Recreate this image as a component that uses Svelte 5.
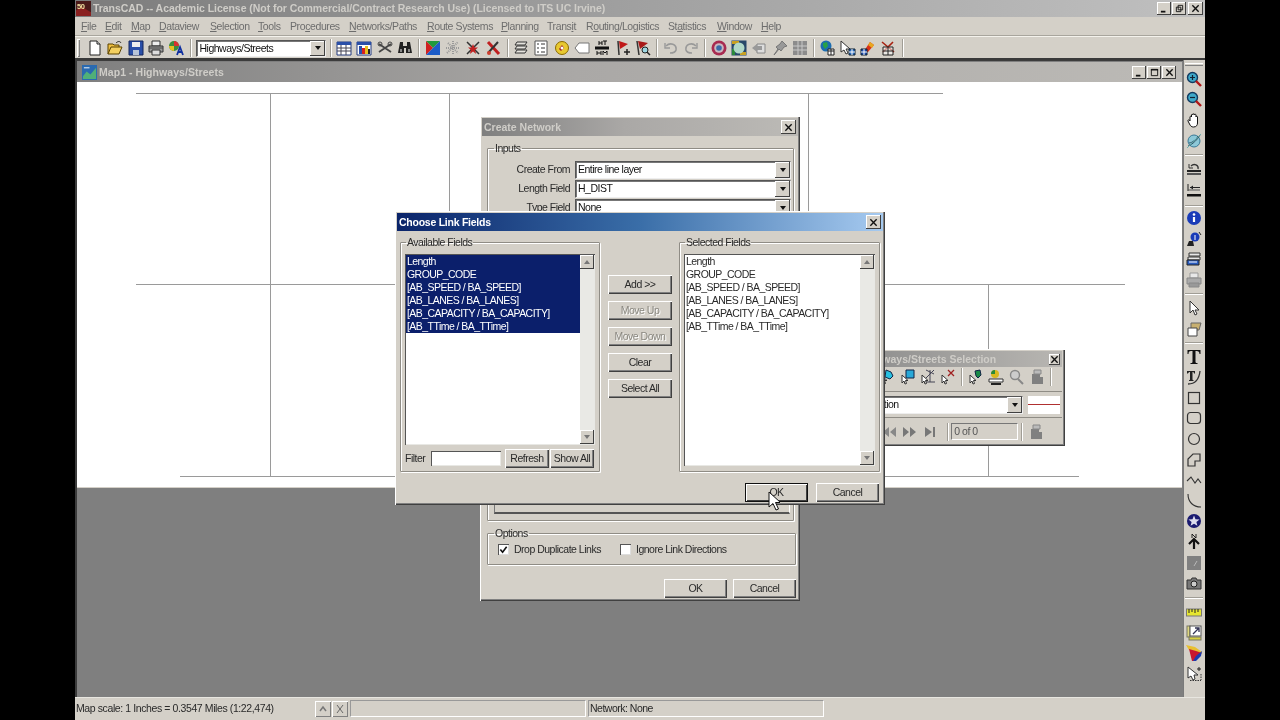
<script>
  const menus = [
    ['', 'F', 'ile', 24], ['', 'E', 'dit', 26], ['', 'M', 'ap', 28], ['', 'D', 'ataview', 51], ['', 'S', 'election', 48],
    ['', 'T', 'ools', 32], ['Pro', 'c', 'edures', 59], ['', 'N', 'etworks/Paths', 78], ['', 'R', 'oute Systems', 74],
    ['', 'P', 'lanning', 46], ['Trans', 'i', 't', 39], ['R', 'o', 'uting/Logistics', 82], ['St', 'a', 'tistics', 49],
    ['', 'W', 'indow', 44], ['', 'H', 'elp', 30]
  ];
  const I = {
    new: '<path d="M3 1h7l3 3v11H3z" fill="#fff" stroke="#222"/><path d="M10 1v3h3" fill="#ddd" stroke="#222"/>',
    open: '<path d="M1 14V4h5l1 1h5v2" fill="#f0c040" stroke="#5a4200"/><path d="M1 14l3-7h11l-3 7z" fill="#f4d060" stroke="#5a4200"/><path d="M9 3c2-2 4-2 5 0" fill="none" stroke="#222"/>',
    save: '<path d="M1 1h14v14H1z" fill="#2a4fa8" stroke="#14265c"/><path d="M4 2h8v5H4z" fill="#eee"/><path d="M5 10h6v5H5z" fill="#b8c4d8"/>',
    print: '<path d="M4 1h8v5H4z" fill="#eee" stroke="#333"/><path d="M1 6h14v6H1z" fill="#999" stroke="#333"/><path d="M4 10h8v5H4z" fill="#ddd" stroke="#333"/><path d="M1 8h14" stroke="#444"/>',
    color: '<circle cx="6" cy="6" r="5" fill="#3c8c3c"/><path d="M6 1a5 5 0 0 1 5 5H6z" fill="#d83030"/><path d="M1 6a5 5 0 0 0 5 5V6z" fill="#e8c020"/><path d="M9 15l3-8 3 8M10 12h4" fill="none" stroke="#1030a0" stroke-width="1.8"/>',
    table: '<path d="M1 2h14v13H1z" fill="#fff" stroke="#223a80"/><path d="M1 2h14v3H1z" fill="#2a4fa8"/><path d="M1 8h14M1 11h14M5 5v10M10 5v10" stroke="#445"/>',
    palette: '<path d="M1 2h14v13H1z" fill="#fff" stroke="#223a80"/><path d="M1 2h14v3H1z" fill="#2a4fa8"/><path d="M3 6h3v8H3z" fill="#2a4fa8"/><path d="M6 8h3v6H6z" fill="#d82020"/><path d="M9 6h3v8H9z" fill="#e8c020"/><path d="M12 9h2v5h-2z" fill="#222"/>',
    scissors: '<path d="M2 4l12 8M2 12l12-8" stroke="#444" stroke-width="1.800"/><circle cx="3" cy="4" r="2" fill="none" stroke="#444"/><circle cx="13" cy="4" r="2" fill="none" stroke="#444"/>',
    binoc: '<path d="M3 2h3v4h4V2h3l2 11H9V8H7v5H1z" fill="#222"/><path d="M3 9h2v3H3zM11 9h2v3h-2z" fill="#888"/>',
    mapcolor: '<path d="M1 1h14L8 8z" fill="#1f9a3c"/><path d="M1 1v14l7-7z" fill="#d02020"/><path d="M15 1v14H1l7-7z" fill="#1c5cc8"/>',
    dots: '<path d="M2 13L13 2M3 3l10 10M8 1v14M1 8h14" stroke="#999" stroke-width="2" stroke-dasharray="1 1"/>',
    starx: '<path d="M2 2l12 12M14 2L2 14" stroke="#333" stroke-width="1.5"/><path d="M8 4l1.5 3.5H13l-3 2.4 1.2 4L8 11.5 4.8 14 6 9.9 3 7.5h3.5z" fill="#c02020"/>',
    xtool: '<path d="M3 2l11 12" stroke="#c02020" stroke-width="3"/><path d="M13 2L3 13" stroke="#333" stroke-width="2"/><circle cx="4" cy="13" r="2" fill="#d04030"/>',
    layers: '<path d="M4 2h10l-2 3H2zM4 6h10l-2 3H2zM4 10h10l-2 3H2z" fill="#e6e4de" stroke="#333"/>',
    list: '<path d="M2 1h12v14H2z" fill="#fff" stroke="#555"/><path d="M4 4h2M8 4h4M4 8h2M8 8h4M4 12h2M8 12h4" stroke="#333"/>',
    yellow: '<circle cx="8" cy="8" r="6.5" fill="#e8c830" stroke="#8a6a00"/><path d="M5 9l3-4 2 3-3 3z" fill="#a02020"/><circle cx="8" cy="8" r="1.5" fill="#fff"/>',
    tag: '<path d="M5 3h10v10H5L1 8z" fill="#fff" stroke="#777"/>',
    ht: '<rect x="1" y="6.5" width="14" height="3" fill="#111"/><path d="M5 1v4M8 1v4M5 3h3M9 1h4M11 1v4M3 11v4M7 11v4M3 13h4M9 11v4M13 11v4M9 11l2 2 2-2" stroke="#111" fill="none"/>',
    flagp: '<path d="M3 1l1 14" stroke="#333" stroke-width="1.5"/><path d="M4 1l9 3-8 5z" fill="#c01818"/><path d="M9 12h6M12 9v6" stroke="#222" stroke-width="1.5"/>',
    flags: '<path d="M2 1l2 14" stroke="#333" stroke-width="1.5"/><path d="M3 1l10 2-8 6z" fill="#a81818"/><circle cx="10" cy="10" r="3" fill="#9cd4e0" stroke="#222"/><path d="M12 12l3 3" stroke="#222" stroke-width="1.5"/>',
    undo: '<path d="M3 6c4-4 11-2 10 4-.5 2-3 3-6 3" fill="none" stroke="#999" stroke-width="1.6"/><path d="M2 3v5h5" fill="none" stroke="#999" stroke-width="1.4"/>',
    redo: '<path d="M13 6C9 2 2 4 3 10c.5 2 3 3 6 3" fill="none" stroke="#999" stroke-width="1.6"/><path d="M14 3v5H9" fill="none" stroke="#999" stroke-width="1.4"/>',
    target: '<circle cx="8" cy="8" r="7.500" fill="#a82a50"/><circle cx="8" cy="8" r="4.800" fill="#c8b8c0"/><circle cx="8" cy="8" r="2.800" fill="#3a6aa8"/>',
    gsq: '<rect x="0.500" y="0.500" width="15" height="15" fill="#28486a"/><path d="M1 1h7v3H1zM9 12h6v3H9z" fill="#c8a020"/><path d="M1 9h3v6H1z" fill="#2a8a3a"/><circle cx="8" cy="8" r="5.500" fill="#b0d8c8"/>',
    arrowbox: '<path d="M6 4h8v9H6z" fill="#ddd" stroke="#888"/><path d="M1 8l5-4v2h5v4H6v2z" fill="#999"/>',
    pin: '<path d="M10 1l5 5-3 1-3 4-2-2-5 6 4-6-2-2 4-3z" fill="#999" stroke="#777"/>',
    grid: '<path d="M1 1h14v14H1z" fill="#8c8c8c"/><path d="M1 6h14M1 10h14M6 1v14M10 1v14" stroke="#c8c8c8"/>',
    globe: '<circle cx="7" cy="6" r="5.500" fill="#1c6cb0"/><path d="M4 3l4-1 1 4-3 3-2-3z" fill="#28a048"/><path d="M9 9h6v6H9z" fill="#fff" stroke="#222"/><path d="M9 11h6M12 9v6" stroke="#222"/>',
    curtab: '<path d="M1 1v11l3-2 2 4 2-1-2-4h4z" fill="#fff" stroke="#333"/><path d="M9 9h6v6H9z" fill="#2a6cc0" stroke="#123"/><path d="M9 12h6M12 9v6" stroke="#fff"/>',
    coltab: '<path d="M4 11l6-9 4 3-6 7z" fill="#d83018"/><path d="M10 2l4 3-2 3-4-3z" fill="#e8a820"/><path d="M1 9h6v6H1z" fill="#1c4cb0" stroke="#123"/><path d="M1 12h6M4 9v6" stroke="#fff"/>',
    xtab: '<path d="M2 2l12 10M13 2L3 12" stroke="#a82010" stroke-width="1.6"/><path d="M3 7h10v8H3z" fill="#fff" fill-opacity=".5" stroke="#222"/><path d="M3 11h10M8 7v8" stroke="#222"/>',
    zin: '<circle cx="6.500" cy="6.500" r="5" fill="#3ea8c8" stroke="#123a60" stroke-width="1.400"/><path d="M4 6.500h5M6.500 4v5" stroke="#123" stroke-width="1.200"/><path d="M10 10l5 5" stroke="#b01818" stroke-width="2.400"/>',
    zout: '<circle cx="6.500" cy="6.500" r="5" fill="#3ea8c8" stroke="#123a60" stroke-width="1.400"/><path d="M4 6.500h5" stroke="#123" stroke-width="1.200"/><path d="M10 10l5 5" stroke="#b01818" stroke-width="2.400"/>',
    hand: '<path d="M4 9V5c0-1 1.500-1 1.500 0V3c0-1 1.500-1 1.500 0v-.5c0-1 1.500-1 1.500 0V3c0-1 1.500-1 1.500 0v2c0-1 1.500-1 1.500 0v6c0 2-1 4-4 4-2 0-3-1-4-3L2 9c-.5-1 1-2 2 0z" fill="#fff" stroke="#111"/>',
    orbit: '<circle cx="8" cy="8" r="6" fill="#8cc8d8" stroke="#3a7a98"/><path d="M2 13C6 12 12 6 14 2M3 10c3 0 8-4 9-7" fill="none" stroke="#356"/><path d="M1 15L15 1" stroke="#5aa" stroke-width=".8"/>',
    rot: '<path d="M5 4c3-3 8-1 7 3" fill="none" stroke="#333" stroke-width="1.300"/><path d="M3 2v4h4" fill="none" stroke="#333"/><rect x="1" y="8" width="14" height="2" fill="#222"/><path d="M1 12h14" stroke="#555" stroke-width="2"/>',
    shift: '<path d="M2 1v7M4 4.500h10" stroke="#222"/><path d="M4 4.500l3-2v4z" fill="#222"/><path d="M2 7h12" stroke="#555"/><rect x="1" y="11" width="14" height="2.500" fill="#111"/>',
    info: '<circle cx="8" cy="8" r="7" fill="#1a3cb8"/><circle cx="8" cy="4.500" r="1.300" fill="#fff"/><path d="M8 7v5" stroke="#fff" stroke-width="2.200"/>',
    info2: '<circle cx="9" cy="6" r="4.500" fill="#1a3cb8"/><path d="M1 15l2-5h4l1 5z" fill="#222"/><path d="M9 4v5" stroke="#fff"/><path d="M13 1l2 3" stroke="#222"/>',
    stack: '<path d="M3 2h11v3H3zM2 6h12v3H2z" fill="#e8e8e8" stroke="#333"/><path d="M1 9h12v5H1z" fill="#2a5cc0" stroke="#222"/><path d="M3 11h8" stroke="#fff"/>',
    grayprint: '<path d="M4 1h8v5H4z" fill="#e8e8e8" stroke="#999"/><path d="M1 6h14v6H1z" fill="#aaa" stroke="#888"/><path d="M3 11h10v4H3z" fill="#999" stroke="#888"/>',
    cursor: '<path d="M4 1v12l3-3 2 5 2-1-2-4h4z" fill="#fff" stroke="#333"/>',
    note: '<path d="M5 2l10 0-2 7H5z" fill="#c8b070" stroke="#666"/><path d="M2 7h9v8H2z" fill="#fff" stroke="#444"/>',
    T: '<path d="M1.500 1h13v4h-1c0-2-1-3-3-3H9.500v11c0 1 1 1 2 1v1h-7v-1c1 0 2 0 2-1V2H5c-2 0-2.500 1-2.500 3h-1z" fill="#111"/>',
    Tc: '<path d="M1 2h8v2.500H8c0-1-.5-1.500-1.500-1.500v7.500c0 .5.500.5 1 .5v1H3v-1c.5 0 1 0 1-.5V3C3 3 2.500 3.500 2 4.500H1z" fill="#222"/><path d="M2 15c6 0 11-4 12-13" fill="none" stroke="#333" stroke-width="1.300"/>',
    rect: '<rect x="2.500" y="2.500" width="11" height="11" fill="none" stroke="#333" stroke-width="1.200"/>',
    rrect: '<rect x="1.500" y="2.500" width="13" height="11" rx="3" fill="none" stroke="#333" stroke-width="1.200"/>',
    circ: '<circle cx="8" cy="8" r="5.500" fill="none" stroke="#333" stroke-width="1.200"/>',
    poly: '<path d="M2 14V7l5-5h7v7H9v5z" fill="none" stroke="#333" stroke-width="1.200"/>',
    zig: '<path d="M1 9l4-4 4 6 3-4 3 4" fill="none" stroke="#333" stroke-width="1.100"/>',
    arc: '<path d="M2 1c0 8 5 13 13 13" fill="none" stroke="#333" stroke-width="1.100"/>',
    star: '<circle cx="8" cy="8" r="7" fill="#1a1a70"/><path d="M8 2.500l1.500 3.700 4 .2-3.100 2.500 1 3.900L8 10.700l-3.400 2.100 1-3.900-3.100-2.500 4-.2z" fill="#dde"/>',
    north: '<path d="M8 15V6M3 10l5-5 5 5" fill="none" stroke="#111" stroke-width="2.200"/><path d="M6 4V0l4 4V0" fill="none" stroke="#111" stroke-width=".9"/>',
    grayimg: '<rect x="1" y="1" width="14" height="14" fill="#808080"/><path d="M8 11l3-5" stroke="#b8b8b8"/>',
    cam: '<path d="M1 5h4l1-2h4l1 2h4v9H1z" fill="#777" stroke="#333"/><circle cx="8" cy="9" r="3" fill="#ccc" stroke="#222"/>',
    ruler: '<rect x="0.500" y="5" width="15" height="7" fill="#e6e630" stroke="#777"/><path d="M3 5v4M6 5v3M9 5v4M12 5v3" stroke="#222"/>',
    rscale: '<rect x="1" y="1" width="3" height="11" fill="#e0d880" stroke="#776"/><rect x="4" y="1" width="11" height="10" fill="#fff" stroke="#555"/><path d="M7 9l6-6M9 3h4v4" stroke="#335" fill="none" stroke-width="1.300"/><rect x="3" y="12" width="12" height="3" fill="#d8d040" stroke="#776"/>',
    ytool: '<path d="M0 0l9 2 7 5-1 2-7-3-5-1z" fill="#e8c030"/><path d="M3 4l7 2 6 2-5 3-3 5-2 0z" fill="#c81830"/><path d="M16 6l-1 5-5 5H7l3-5z" fill="#1c3cb0"/>',
    cursd: '<path d="M2 1v11l3-2 2 4 2-1-1-4h4z" fill="#fff" stroke="#333"/><path d="M4 14.500h11M15 8v6" stroke="#333" stroke-dasharray="1.500 1"/><path d="M11 3h4M13 1v4" stroke="#222"/>',
    sel1: '<path d="M7 1l5 2 2 4-3 3-5-2z" fill="#28c0e0" stroke="#124"/><path d="M2 6v8l2-2 1 3 1.500-.5-1-3H8z" fill="#fff" stroke="#333"/>',
    sel2: '<path d="M6 1h8v8H6z" fill="#28a8d8" stroke="#124"/><path d="M2 6v8l2-2 1 3 1.500-.5-1-3H8z" fill="#fff" stroke="#333"/>',
    sel3: '<path d="M6 1l8 4M14 1L6 9M10 1v12M5 13h10" stroke="#445" fill="none"/><path d="M2 6v8l2-2 1 3 1.500-.5-1-3H8z" fill="#fff" stroke="#333"/>',
    sel4: '<path d="M8 1l6 6M14 1L8 7" stroke="#a02020" stroke-width="1.300"/><path d="M2 6v8l2-2 1 3 1.500-.5-1-3H8z" fill="#fff" stroke="#333"/>',
    sel5: '<path d="M7 2l5-1 1 5-3 3-2-2z" fill="#1a8a48" stroke="#124"/><path d="M2 6v8l2-2 1 3 1.500-.5-1-3H8z" fill="#fff" stroke="#333"/>',
    sel6: '<circle cx="7" cy="5" r="4" fill="#d8b820"/><path d="M3 5a4 4 0 0 1 4-4v4z" fill="#2a8a3a"/><path d="M1 10h14v3H1z" fill="#fff" stroke="#333"/><path d="M3 15h10" stroke="#222" stroke-width="2"/>',
    sel7: '<circle cx="7" cy="6" r="4.500" fill="#ccc" stroke="#888" stroke-width="1.400"/><path d="M10 10l5 5" stroke="#888" stroke-width="2"/>',
    sel8: '<path d="M3 5h8v3h3v7H3z" fill="#808080"/><path d="M5 1h7v4H5z" fill="#bbb" stroke="#888"/>',
    first: '<path d="M15 3L9 8l6 5zM8 3L2 8l6 5z" fill="#888"/>',
    next: '<path d="M1 3l6 5-6 5zM8 3l6 5-6 5z" fill="#777"/>',
    last: '<path d="M3 3l7 5-7 5z" fill="#777"/><path d="M12 3v10" stroke="#777" stroke-width="2"/>'
  };
  const mainBar = [
    ['new','open','save','print','color'],
    'combo',
    ['table','palette','scissors','binoc'],
    ['mapcolor','dots','starx','xtool'],
    ['layers','list','yellow','tag','ht','flagp','flags'],
    ['undo','redo'],
    ['target','gsq','arrowbox','pin','grid'],
    ['globe','curtab','coltab','xtab']
  ];
  const sideBar = [
    ['zin','zout','hand','orbit'], ['rot','shift'], ['info','info2','stack','grayprint'], ['cursor','note'],
    ['T','Tc','rect','rrect','circ','poly','zig','arc','star','north','grayimg','cam'], ['ruler','rscale','ytool','cursd']
  ];
  const fields = ['Length','GROUP_CODE','[AB_SPEED / BA_SPEED]','[AB_LANES / BA_LANES]','[AB_CAPACITY / BA_CAPACITY]','[AB_TTime / BA_TTime]'];
</script>

{#snippet icon(n)}
  <svg class="ic" viewBox="0 0 16 16" aria-hidden="true">{@html I[n]}</svg>
{/snippet}

{#snippet scroll()}
  <div class="sb">
    <span class="sbtn"><i class="up"></i></span>
    <span class="track"></span>
    <span class="sbtn"><i class="down"></i></span>
  </div>
{/snippet}

{#snippet combo(text, cls)}
  <div class="combo {cls}"><span class="combotext">{text}</span><span class="cbtn"><i class="down"></i></span></div>
{/snippet}

{#snippet ctl(kind, cls)}
  <span class="ctl {cls}">
    {#if kind === 'x'}
      <svg viewBox="0 0 10 10"><path d="M1.500 1.500l7 7M8.500 1.500l-7 7" stroke="#111" stroke-width="1.500"/></svg>
    {:else if kind === 'min'}
      <svg viewBox="0 0 10 10"><path d="M1 8.500h5" stroke="#111" stroke-width="2"/></svg>
    {:else if kind === 'max'}
      <svg viewBox="0 0 10 10"><path d="M1.500 1.500h7v7h-7z" fill="none" stroke="#111"/><path d="M1 2h8" stroke="#111" stroke-width="1.500"/></svg>
    {:else}
      <svg viewBox="0 0 10 10"><path d="M3.500 1.500h5v5h-5zM1.500 3.500h5v5h-5z" fill="#d4d0c8" stroke="#111"/></svg>
    {/if}
  </span>
{/snippet}

<div class="screen">
  <div class="app">
    <header class="apptitle">
      <svg class="appicon" viewBox="0 0 16 16"><rect width="16" height="16" fill="#4a1a1a"/><path d="M0 10l6-4 10 6v4H0z" fill="#8a2020"/><text x="1" y="9" font-size="8" font-weight="700" fill="#f0e0a0" font-family="Liberation Sans">50</text></svg>
      <span class="apptext">TransCAD -- Academic License (Not for Commercial/Contract Research Use) (Licensed to ITS UC Irvine)</span>
      <span class="ctls">
        {@render ctl('min', '')}
        {@render ctl('res', '')}
        {@render ctl('x', 'gapl')}
      </span>
    </header>

    <nav class="menubar">
      {#each menus as m}
        <span class="menu" style="width:{m[3]}px">{m[0]}<u>{m[1]}</u>{m[2]}</span>
      {/each}
    </nav>

    <div class="toolbar">
      <span class="grip"></span>
      {#each mainBar as g, i}
        {#if g === 'combo'}
          {@render combo('Highways/Streets', 'layercombo')}
        {:else}
          <div class="tgroup">
            {#each g as n}<span class="tb">{@render icon(n)}</span>{/each}
          </div>
        {/if}
        <span class="tsep"></span>
      {/each}
    </div>

    <div class="main">
      <div class="desktop">
        <section class="mapwin">
          <div class="wintitle inactive">
            <svg class="mapicon" viewBox="0 0 16 16"><rect width="16" height="16" fill="#2a6ab0"/><path d="M1 12l4-5 4 3 6-7v12H1z" fill="#50b078"/><path d="M2 3h6" stroke="#fff"/></svg>
            <span class="maptitle">Map1 - Highways/Streets</span>
            <span class="mapctls">
              {@render ctl('min', '')}
              {@render ctl('max', '')}
              {@render ctl('x', '')}
            </span>
          </div>
          <div class="canvas">
            <svg class="roads" viewBox="0 0 1105 406" aria-hidden="true">
              <g stroke="#9a9a9a" stroke-width="1" fill="none">
                <path d="M59 11.500H866M59 202.500H1048M103 394.500H1002"/>
                <path d="M193.500 11V394M372.500 11V394M731.500 11V394M911.500 202V394"/>
              </g>
            </svg>
          </div>
        </section>

        <section class="seltool">
          <div class="seltitle"><span class="seltext">Highways/Streets Selection</span>{@render ctl('x', 'small')}</div>
          <div class="selrow icons">
            {#each ['sel1','sel2','sel3','sel4'] as n}<span class="tb">{@render icon(n)}</span>{/each}
            <span class="tsep"></span>
            {#each ['sel5','sel6','sel7','sel8'] as n}<span class="tb">{@render icon(n)}</span>{/each}
            <span class="tsep end"></span>
          </div>
          <div class="selrow mid">
            {@render combo('Selection', 'selcombo')}
            <span class="swatch"><i></i></span>
          </div>
          <div class="selrow nav">
            <span class="tb">{@render icon('first')}</span>
            <span class="tb">{@render icon('next')}</span>
            <span class="tb">{@render icon('last')}</span>
            <span class="tsep navfirst"></span>
            <span class="counter">0 of 0</span>
            <span class="tsep"></span>
            <span class="tb">{@render icon('sel8')}</span>
          </div>
        </section>

        <section class="dlg createnet">
          <div class="dlgtitle inactive"><span>Create Network</span>{@render ctl('x', 'dlgx')}</div>
          <fieldset class="inputs">
            <legend>Inputs</legend>
            <div class="frow"><span>Create From</span>{@render combo('Entire line layer', 'wide')}</div>
            <div class="frow"><span>Length Field</span>{@render combo('H_DIST', 'wide')}</div>
            <div class="frow"><span>Type Field</span>{@render combo('None', 'wide')}</div>
            <div class="hidden-box"></div>
          </fieldset>
          <fieldset class="options">
            <legend>Options</legend>
            <div class="checks">
              <span class="check first"><span class="box"><svg viewBox="0 0 10 10"><path d="M1.500 5l2.500 3 4.500-6" fill="none" stroke="#111" stroke-width="1.800"/></svg></span>Drop Duplicate Links</span>
              <span class="check"><span class="box"></span>Ignore Link Directions</span>
            </div>
          </fieldset>
          <div class="dlgbtns">
            <button class="btn wide">OK</button>
            <button class="btn wide">Cancel</button>
          </div>
        </section>

        <section class="dlg chooser">
          <div class="dlgtitle active"><span>Choose Link Fields</span>{@render ctl('x', 'dlgx')}</div>
          <div class="panes">
            <fieldset class="pane">
              <legend>Available Fields</legend>
              <div class="list short">
                <div class="items">
                  {#each fields as f}<div class="item sel">{f}</div>{/each}
                </div>
                {@render scroll()}
              </div>
              <div class="filter">
                <span class="flabel">Filter</span>
                <span class="input"></span>
                <button class="btn flat refresh">Refresh</button>
                <button class="btn flat showall">Show All</button>
              </div>
            </fieldset>
            <div class="midbtns">
              <button class="btn mb">Add &gt;&gt;</button>
              <button class="btn mb off">Move Up</button>
              <button class="btn mb off">Move Down</button>
              <button class="btn mb">Clear</button>
              <button class="btn mb">Select All</button>
            </div>
            <fieldset class="pane right">
              <legend>Selected Fields</legend>
              <div class="list tall">
                <div class="items">
                  {#each fields as f}<div class="item">{f}</div>{/each}
                </div>
                {@render scroll()}
              </div>
            </fieldset>
          </div>
          <div class="dlgbtns chooserbtns">
            <button class="btn wide default">OK</button>
            <button class="btn wide">Cancel</button>
          </div>
        </section>

        <svg class="pointer" viewBox="0 0 12 20" aria-hidden="true"><path d="M1 1v15l4-3.500 3 6.500 2.500-1-3-6.500h5z" fill="#fff" stroke="#111"/></svg>
      </div>

      <aside class="sidebar">
        <span class="hgrip"></span>
        {#each sideBar as g, i}
          {#if i > 0}<span class="hsep s{i}"></span>{/if}
          {#each g as n}<span class="sb-btn">{@render icon(n)}</span>{/each}
        {/each}
      </aside>
    </div>

    <footer class="status">
      <span class="scale">Map scale: 1 Inches = 0.3547 Miles (1:22,474)</span>
      <span class="stbtn"><svg viewBox="0 0 10 10"><path d="M2 7l3-4 3 4" fill="none" stroke="#777" stroke-width="1.500"/></svg></span>
      <span class="stbtn"><svg viewBox="0 0 10 10"><path d="M2 1l6 8M8 1L2 9" stroke="#666"/></svg></span>
      <span class="stfield blank"></span>
      <span class="stfield net">Network: None</span>
    </footer>
  </div>
</div>

<style>
  :global(body) { margin: 0; background: #000; overflow: hidden; }
  .screen { width: 1280px; height: 720px; background: #000; display: flex; justify-content: center; font: 10.5px/13px "Liberation Sans", Arial, sans-serif; letter-spacing: -.5px; color: #2a2a2a; filter: blur(.4px); }
  .app { width: 1130px; height: 720px; background: #d4d0c8; display: flex; flex-direction: column; overflow: hidden; }

  .apptitle { height: 17px; flex: none; display: flex; align-items: center; background: linear-gradient(90deg, #7c7c7c 0%, #9a9a9a 40%, #c0c0c0 100%); padding: 0 2px 0 1px; }
  .appicon { width: 15px; height: 15px; margin-right: 2px; }
  .apptext { font-weight: 700; letter-spacing: -.05px; color: #cfcdc8; flex: 1; white-space: nowrap; }
  .ctls { display: flex; gap: 1px; }
  .ctl { width: 14px; height: 13px; background: #d4d0c8; display: flex; align-items: center; justify-content: center; box-shadow: inset -1px -1px 0 #404040, inset 1px 1px 0 #fff; flex: none; }
  .ctl svg { width: 9px; height: 9px; }
  .gapl { margin-left: 1px; width: 15px; }

  .menubar { height: 19px; flex: none; display: flex; align-items: center; padding-left: 6px; color: #6d6d6d; border-bottom: 1px solid #a8a59d; box-sizing: border-box; letter-spacing: -.4px; }
  .menu { display: block; white-space: nowrap; flex: none; }
  .menu u { text-decoration-thickness: 1px; }

  .toolbar { height: 24px; flex: none; display: flex; align-items: center; padding: 1px 0 0 2px; box-sizing: border-box; border-top: 1px solid #f4f2ec; border-bottom: 2px solid #3a3a3a; }
  .grip { width: 3px; height: 18px; margin-right: 5px; background: #d4d0c8; box-shadow: inset 1px 1px 0 #fff, inset -1px -1px 0 #808080; }
  .tgroup { display: flex; }
  .tb { width: 20.300px; height: 20px; display: flex; align-items: center; justify-content: center; flex: none; }
  .ic { width: 16px; height: 16px; display: block; }
  .tsep { width: 1px; height: 18px; margin: 0 3.300px 0 3.100px; background: #a09d95; box-shadow: 1px 0 0 #fff; flex: none; }

  .combo { display: flex; align-items: center; background: #fff; box-sizing: border-box; border: 1px solid #555; border-right-color: #eee; border-bottom-color: #eee; box-shadow: inset 1px 1px 0 #777; color: #111; overflow: hidden; flex: none; }
  .combotext { flex: 1; padding-left: 2px; white-space: nowrap; }
  .cbtn { width: 15px; align-self: stretch; background: #d4d0c8; box-shadow: inset -1px -1px 0 #404040, inset 1px 1px 0 #fff; display: flex; align-items: center; justify-content: center; flex: none; }
  .down, .up { width: 0; height: 0; border-left: 3.500px solid transparent; border-right: 3.500px solid transparent; display: block; }
  .down { border-top: 4px solid #111; }
  .up { border-bottom: 4px solid #777; }
  .sb .down { border-top-color: #777; }
  .layercombo { width: 130px; height: 17px; margin-left: 2.600px; }

  .main { flex: 1; min-height: 0; display: flex; }
  .desktop { flex: 1; position: relative; background: #7f7f7f; box-shadow: inset 2px 1px 0 #3c3c3c; overflow: hidden; }
  .sidebar { width: 22px; flex: none; display: flex; flex-direction: column; align-items: center; border-left: 1px solid #7a7a7a; box-sizing: border-box; padding-right: 1px; }
  .hgrip { width: 18px; height: 3px; margin: 3px 0 2.500px; box-shadow: inset 0 1px 0 #fff, inset 0 -1px 0 #808080; flex: none; }
  .hsep { width: 18px; height: 1px; margin: 3.250px 0; background: #a09d95; box-shadow: 0 1px 0 #fff; flex: none; }
  .hsep.s1 { margin-bottom: 5px; }
  .hsep.s2 { margin-bottom: 2.250px; }
  .hsep.s5 { margin-bottom: 4.250px; }
  .sb-btn { width: 20px; height: 20.600px; display: flex; align-items: center; justify-content: center; flex: none; }

  .mapwin { position: absolute; left: 2px; top: 2px; width: 1105px; height: 426px; background: #d4d0c8; display: flex; flex-direction: column; }
  .wintitle { height: 20px; flex: none; display: flex; align-items: center; padding: 0 6px 0 5px; }
  .inactive { background: linear-gradient(90deg, #7f7f7f, #aaa8a6 45%, #bcbab6); }
  .mapicon { width: 15px; height: 15px; margin-right: 2px; }
  .maptitle { font-weight: 700; letter-spacing: .05px; color: #cfcdc8; flex: 1; }
  .mapctls { display: flex; gap: 1px; }
  .canvas { flex: 1; background: #fff; position: relative; margin-bottom: 1px; }
  .roads { position: absolute; inset: 0; width: 1105px; height: 406px; }

  .dlg { position: absolute; background: #d4d0c8; box-sizing: border-box; box-shadow: inset 1px 1px 0 #fff, inset -1px -1px 0 #404040, inset -2px -2px 0 #808080; padding: 2px; display: flex; flex-direction: column; }
  .dlgtitle { height: 18px; flex: none; display: flex; align-items: center; justify-content: space-between; padding: 0 2px; font-weight: 700; letter-spacing: 0; color: #cfcdc8; }
  .active { background: linear-gradient(90deg, #0a246a, #3a6ea8 50%, #a6caf0); color: #fff; letter-spacing: -.25px; }
  .dlgx { width: 15px; height: 14px; }

  fieldset { margin: 0; min-width: 0; border: 1px solid #8f8c85; box-shadow: 1px 1px 0 #fff, inset 1px 1px 0 #fff; border-radius: 1px; box-sizing: border-box; }
  legend { padding: 0 1px; margin-left: 1px; color: #2a2a2a; line-height: 12px; }
  .inputs legend { margin-left: 3px; }
  .options legend { margin-left: -4px; }

  .createnet { left: 405px; top: 56px; width: 320px; height: 485px; }
  .inputs { margin: 6px 4px 0 5px; padding: 6px 2px 3px 3px; height: 379px; display: block; }
  .frow { display: flex; justify-content: flex-end; align-items: center; gap: 5px; height: 19px; }
  .combo.wide { width: 216px; height: 18px; }
  .hidden-box { height: 14px; margin: 281px 1px 0 3px; background: #d4d0c8; border: 1px solid #777; border-top: 0; border-right-color: #fff; border-bottom: 2px solid #555; }
  .options { margin: 6px 2px 0 5px; padding: 4px 3px 0 10px; height: 38px; }
  .checks { display: flex; align-items: center; }
  .check { display: flex; align-items: center; gap: 5px; }
  .check.first { width: 122px; }
  .box { width: 11px; height: 11px; background: #fff; box-shadow: inset 1px 1px 0 #555, inset -1px -1px 0 #ddd; display: flex; align-items: center; justify-content: center; }
  .box svg { width: 9px; height: 9px; }
  .dlgbtns { display: flex; justify-content: flex-end; gap: 6px; padding: 14px 2px 0 0; }

  .btn { font: inherit; letter-spacing: -.5px; color: #2a2a2a; background: #d4d0c8; border: 0; padding: 0; box-shadow: inset 1px 1px 0 #fff, inset -1px -1px 0 #404040, inset -2px -2px 0 #808080; height: 19px; display: block; }
  .btn.wide { width: 63px; }
  .btn.default { outline: 1px solid #111; outline-offset: -1px; box-shadow: inset 2px 2px 0 #fff, inset -2px -2px 0 #404040; }
  .btn.mb { width: 64px; flex: none; }
  .btn.off { color: #8a8880; text-shadow: 1px 1px 0 #fff; }
  .btn.flat { padding: 0; flex: none; }
  .btn.refresh { width: 44px; margin-right: 1px; }
  .btn.showall { width: 44px; }

  .chooser { left: 320px; top: 151px; width: 490px; height: 294px; }
  .panes { display: flex; padding: 0 3px; margin-top: 5px; }
  .pane { width: 200px; height: 236px; padding: 6px 4px 0; display: flex; flex-direction: column; flex: none; }
  .pane.right { width: 201px; }
  .midbtns { width: 79px; flex: none; margin: 39px 0 0; padding-left: 8px; box-sizing: border-box; display: flex; flex-direction: column; gap: 7px; }
  .list { display: flex; background: #fff; box-shadow: inset 1px 1px 0 #555, inset -1px -1px 0 #e8e8e4; box-sizing: border-box; padding: 1px; }
  .list.short { height: 191px; }
  .list.tall { height: 212px; }
  .items { flex: 1; min-width: 0; }
  .item { height: 13px; line-height: 13px; padding-left: 1px; white-space: nowrap; color: #2a2a2a; letter-spacing: -.55px; }
  .item.sel { background: #0b1f6b; color: #fff; }
  .sb { width: 14px; flex: none; display: flex; flex-direction: column; background: #e9e9e5; }
  .sbtn { height: 14px; background: #d4d0c8; box-shadow: inset -1px -1px 0 #404040, inset 1px 1px 0 #fff; display: flex; align-items: center; justify-content: center; flex: none; }
  .track { flex: 1; }
  .filter { display: flex; align-items: center; height: 20px; margin-top: 3px; }
  .flabel { width: 26px; flex: none; }
  .input { width: 70px; height: 15px; background: #fff; margin-right: 4px; box-shadow: inset 1px 1px 0 #555, inset -1px -1px 0 #e8e8e4; flex: none; }
  .chooserbtns { padding: 11px 4px 0 0; gap: 8px; }

  .seltool { position: absolute; left: 755px; top: 289px; width: 235px; height: 97px; background: #d4d0c8; box-sizing: border-box; box-shadow: inset 1px 1px 0 #fff, inset -1px -1px 0 #404040, inset -2px -2px 0 #808080; padding: 2px 3px; display: flex; flex-direction: column; overflow: hidden; }
  .seltitle { height: 16px; flex: none; display: flex; align-items: center; justify-content: space-between; padding: 0 2px 0 26px; background: linear-gradient(90deg, #888, #b8b6b2); font-weight: 700; letter-spacing: 0; color: #cfcdc8; }
  .ctl.small { width: 11px; height: 11px; }
  .selrow { display: flex; justify-content: flex-end; align-items: center; flex: none; }
  .selrow.icons { height: 20px; }
  .tsep.end { margin-right: 11px; }
  .selrow.mid { height: 27px; gap: 5px; padding-right: 2px; border-top: 1px solid #8f8c85; border-bottom: 1px solid #8f8c85; margin-top: 4px; box-sizing: border-box; }
  .selcombo { width: 166px; height: 18px; }
  .swatch { width: 32px; height: 18px; background: #fff; display: flex; align-items: center; }
  .swatch i { display: block; width: 100%; height: 1px; background: #b03030; }
  .selrow.nav { height: 27px; padding-right: 16px; }
  .tsep.navfirst { margin-left: 7px; }
  .counter { width: 67px; height: 17px; box-sizing: border-box; padding-left: 2px; line-height: 15px; border: 1px solid #777; border-right-color: #fff; border-bottom-color: #fff; color: #555; }

  .pointer { position: absolute; left: 693px; top: 431px; width: 12px; height: 20px; }

  .status { height: 23px; flex: none; display: flex; align-items: center; border-top: 1px solid #e8e6e0; box-sizing: border-box; padding: 0 0 1px 1px; }
  .scale { width: 239px; white-space: nowrap; flex: none; letter-spacing: -.4px; }
  .stbtn { width: 16px; height: 16px; margin-right: 1px; box-shadow: inset 1px 1px 0 #fff, inset -1px -1px 0 #808080; display: flex; align-items: center; justify-content: center; flex: none; }
  .stbtn svg { width: 10px; height: 10px; }
  .stfield { height: 17px; box-sizing: border-box; border: 1px solid #999; border-right-color: #fff; border-bottom-color: #fff; margin-right: 2px; line-height: 15px; white-space: nowrap; flex: none; }
  .blank { width: 236px; margin-left: 1px; }
  .net { width: 236px; padding-left: 1px; }
</style>
